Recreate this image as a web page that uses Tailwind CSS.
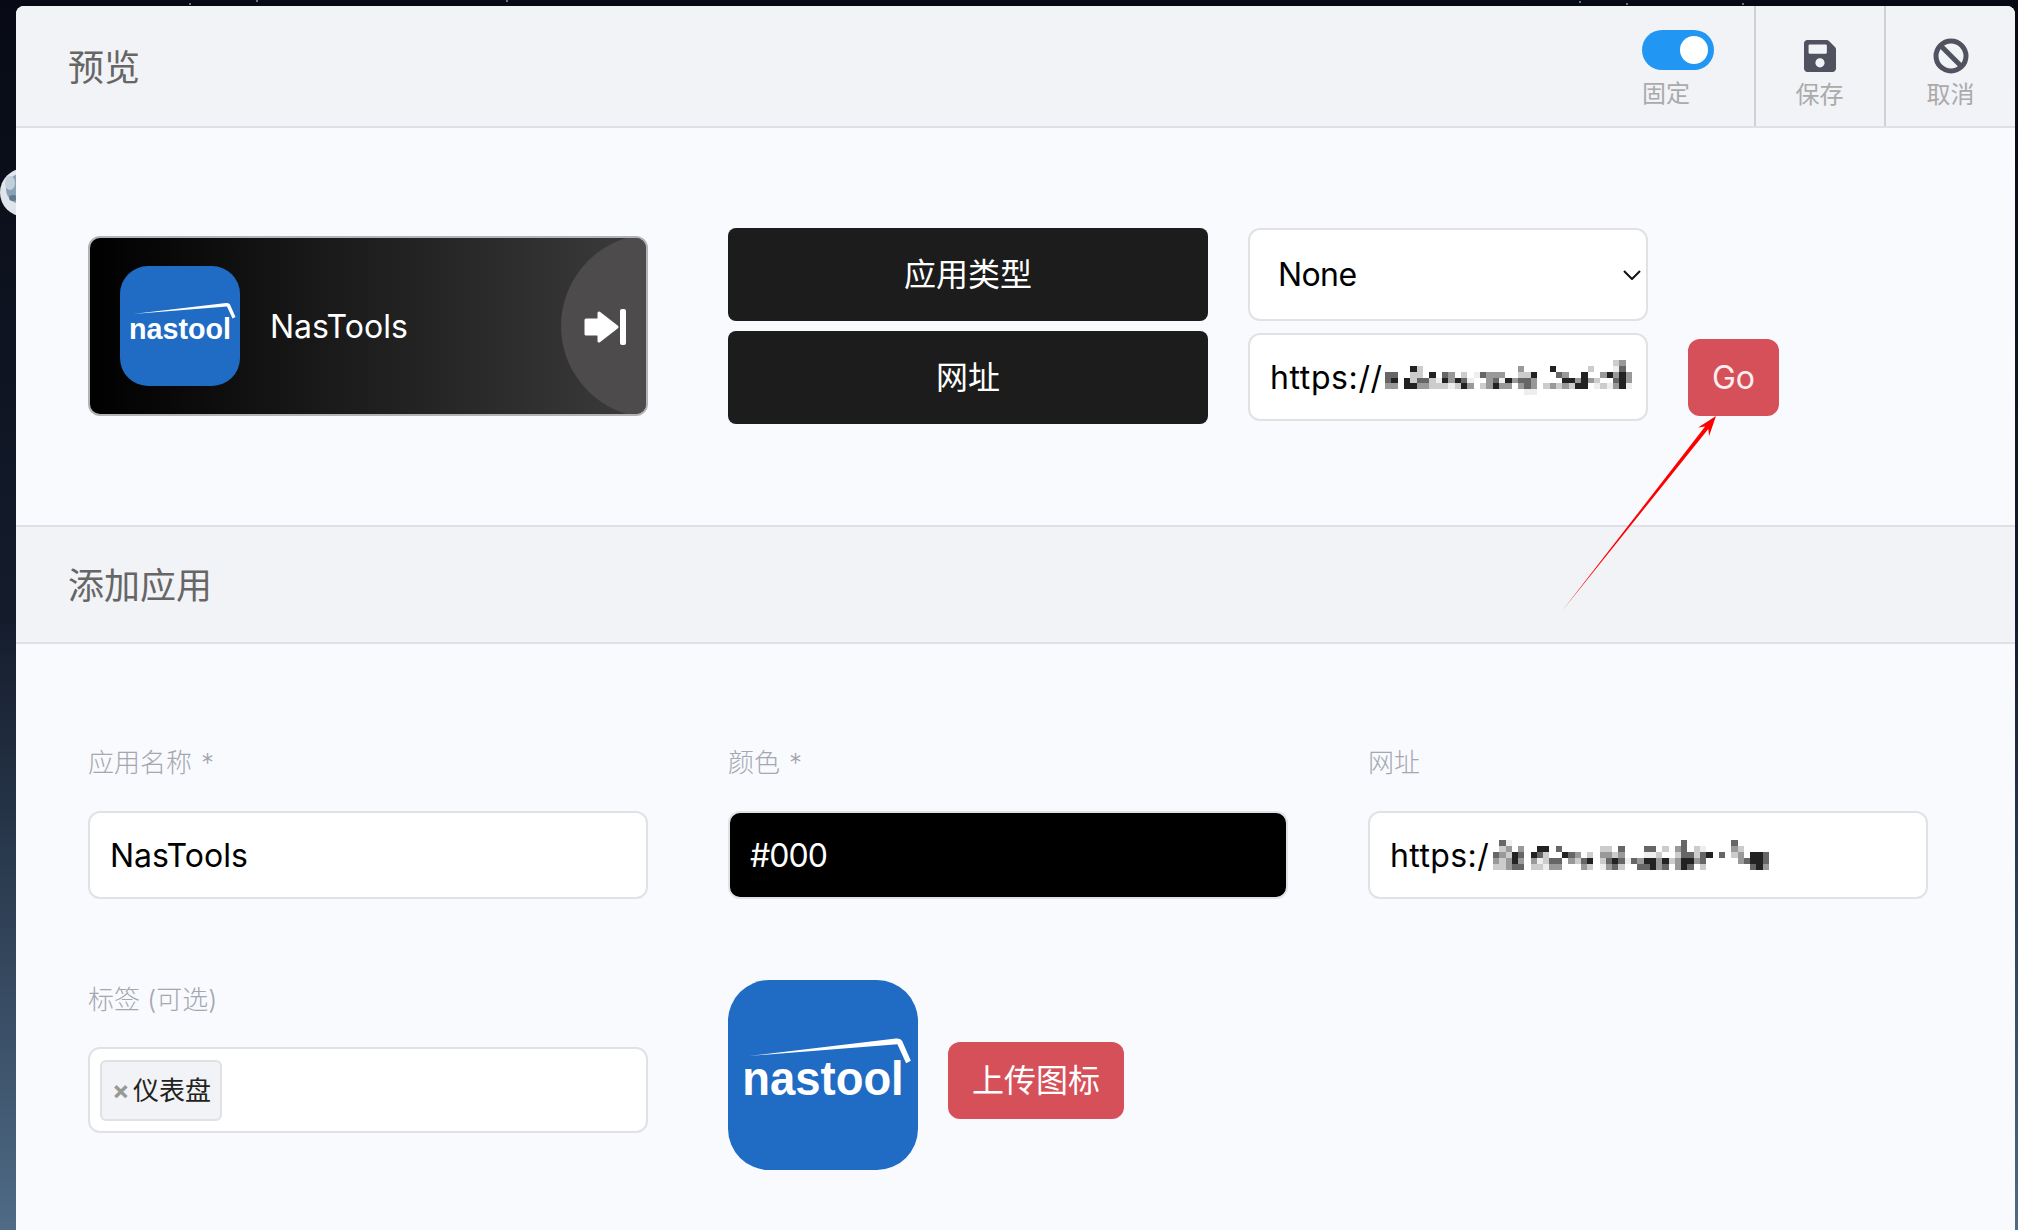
<!DOCTYPE html>
<html lang="zh-CN">
<head>
<meta charset="utf-8">
<title>添加应用</title>
<script src="https://cdn.jsdelivr.net/npm/@tailwindcss/browser@4"></script>
</head>
<body class="relative h-[1230px] overflow-hidden bg-gradient-to-b from-[#070a14] via-[#141c2c] to-[#4f6b86] font-['Inter','Noto_Sans_CJK_SC',sans-serif]">
<svg class="absolute left-0 top-[168px]" width="48" height="49" viewBox="0 0 48 49"><circle cx="24" cy="24.500" r="24" fill="#dfe5ea"/><circle cx="21" cy="21" r="15" fill="#8ba2b6"/><ellipse cx="10" cy="15" rx="5" ry="7" fill="#c2d0dc"/><ellipse cx="13" cy="30" rx="4" ry="3" fill="#64798d"/></svg>
<svg class="absolute left-0 top-0" width="2018" height="6"><g fill="#8a93a3"><circle cx="190" cy="4" r="1"/><circle cx="257" cy="1" r="1"/><circle cx="507" cy="1" r="1"/><circle cx="1580" cy="2" r="1"/><circle cx="1627" cy="4" r="1"/><circle cx="1743" cy="4" r="1"/></g></svg>

<main class="relative ml-[16px] mr-[3px] mt-[6px] h-[1224px] overflow-hidden rounded-t-[8px] bg-[#f9fafe]">
  <!-- header -->
  <header class="flex h-[122px] items-stretch border-b-2 border-[#dfe0e7] bg-[#f2f3f7] pl-[52px]">
    <h2 class="flex flex-1 items-center pt-[4px] text-[36px] font-normal text-[#666]">预览</h2>
    <div class="flex w-[112px] flex-col items-start pt-[24px]">
      <div class="relative h-[40px] w-[72px] rounded-full bg-[#2196f3]"><span class="absolute right-[6px] top-[6px] size-[28px] rounded-full bg-white"></span></div>
      <span class="mt-[9px] text-[24px] leading-[30px] font-normal text-[#aaa]">固定</span>
    </div>
    <div class="flex w-[130px] flex-col items-center border-l-2 border-[#d0d1d6] pr-[1px] pt-[34px]">
      <svg width="32" height="32" viewBox="0 32 448 448" fill="#50525f"><path d="M433.941 129.941l-83.882-83.882A48 48 0 0 0 316.118 32H48C21.49 32 0 53.49 0 80v352c0 26.51 21.49 48 48 48h352c26.51 0 48-21.49 48-48V163.882a48 48 0 0 0-14.059-33.941zM224 416c-35.346 0-64-28.654-64-64 0-35.346 28.654-64 64-64s64 28.654 64 64c0 35.346-28.654 64-64 64zm96-304.52V212c0 6.627-5.373 12-12 12H76c-6.627 0-12-5.373-12-12V108c0-6.627 5.373-12 12-12h228.52c3.183 0 6.235 1.264 8.485 3.515l3.48 3.48A11.996 11.996 0 0 1 320 111.48z"/></svg>
      <span class="mt-[8px] text-[24px] leading-[30px] font-normal text-[#aaa]">保存</span>
    </div>
    <div class="flex w-[131px] flex-col items-center border-l-2 border-[#d0d1d6] pt-[32px]">
      <svg width="36" height="36" viewBox="0 0 36 36" fill="none" stroke="#50525f" stroke-width="5"><circle cx="18" cy="18" r="15"/><path d="M7.500 7.500l21 21"/></svg>
      <span class="mt-[6px] text-[24px] leading-[30px] font-normal text-[#aaa]">取消</span>
    </div>
  </header>

  <!-- preview -->
  <section class="flex h-[397px] items-start pl-[72px] pt-[100px]">
    <div class="relative mt-[8px] flex h-[180px] w-[560px] items-center overflow-hidden rounded-[12px] border-2 border-[#b3b3b7] bg-linear-to-r/srgb from-[#000] to-[#3c3c3c] pl-[30px]">
      <svg class="shrink-0" width="120" height="120" viewBox="0 0 120 120"><rect width="120" height="120" rx="28" fill="#206bc4"/><path d="M13 48L106 37Q109 36.500 110 38.500L115.500 51L112.500 52.500L107 40.500Z" fill="#fff"/><text x="9" y="72.500" font-family="Liberation Sans" font-weight="700" font-size="30" fill="#fff" textLength="102" lengthAdjust="spacingAndGlyphs">nastool</text></svg>
      <span class="ml-[30px] pt-[1px] text-[32px] text-white">NasTools</span>
      <div class="absolute left-[471px] top-[-4px] size-[184px] rounded-full bg-[#4d4b4c]"></div>
      <svg class="absolute left-[494px] top-[71px]" width="42" height="36" viewBox="0 0 42 36" fill="#fff"><path d="M2 11H15V4L33 18L15 32V25H2Z" stroke="#fff" stroke-width="3" stroke-linejoin="round"/><rect x="36" y="0" width="6" height="36" rx="2"/></svg>
    </div>
    <div class="ml-[80px] flex w-[480px] flex-col gap-[10px]">
      <div class="flex h-[93px] items-center justify-center rounded-[8px] bg-[#1c1c1c] text-[32px] text-white">应用类型</div>
      <div class="flex h-[93px] items-center justify-center rounded-[8px] bg-[#1c1c1c] text-[32px] text-white">网址</div>
    </div>
    <div class="ml-[40px] flex w-[400px] flex-col gap-[12px]">
      <div class="relative h-[93px]">
        <select class="h-full w-full appearance-none rounded-[12px] border-2 border-[#e1e2e6] bg-white pl-[28px] text-[32px] tracking-[-0.6px] text-black"><option>None</option></select>
        <svg class="absolute right-[7px] top-[42px]" width="18" height="10" viewBox="0 0 18 10" fill="none" stroke="#111" stroke-width="2"><path d="M1 1l8 8 8-8"/></svg>
      </div>
      <div class="relative h-[88px]">
        <input class="h-full w-full rounded-[12px] border-2 border-[#e1e2e6] bg-white pl-[20px] text-[32px] tracking-[0.6px] text-black" value="https://">
        <svg class="absolute left-[137px] top-[27px]" width="247" height="35" viewBox="0 0 39 6" preserveAspectRatio="none" shape-rendering="crispEdges" fill="none" stroke-width="1">
          <path stroke="#eee" d="M36 1.500h1M14 2.500h1M8 3.500h1M13 3.500h1M18 3.500h1M10 4.500h1M33 4.500h1M35 4.500h1M38 4.500h1M22 5.500h2"/>
          <path stroke="#ccc" d="M36 .5h1M5 1.500h1M32 1.500h1M4 2.500h2M12 2.500h1M21 2.500h2M4 3.500h1M7 3.500h1M33 3.500h1M7 4.500h3M11 4.500h1M15 4.500h1M25 4.500h1M27 4.500h1M29 4.500h1M34 4.500h1"/>
          <path stroke="#999" d="M37 .5h1M21 1.500h1M10 2.500h1M16 2.500h3M28 2.500h1M34 2.500h1M36 2.500h1M38 2.500h1M10 3.500h1M16 3.500h1M20 3.500h1M23 3.500h1M30 3.500h1M32 3.500h1M38 3.500h1M0 4.500h2M5 4.500h2M13 4.500h1M16 4.500h1M18 4.500h2M21 4.500h1M23 4.500h1M26 4.500h1M28 4.500h1M36 4.500h1"/>
          <path stroke="#666" d="M37 1.500h1M0 2.500h2M9 2.500h1M15 2.500h1M27 2.500h1M0 3.500h1M5 3.500h2M12 3.500h1M17 3.500h1M21 3.500h2M36 3.500h1M22 4.500h1"/>
          <path stroke="#222" d="M4 1.500h1M26 1.500h1M7 2.500h1M23 2.500h1M31 2.500h1M35 2.500h1M37 2.500h1M1 3.500h1M3 3.500h1M9 3.500h1M11 3.500h1M19 3.500h1M28 3.500h2M31 3.500h1M37 3.500h1M3 4.500h2M12 4.500h1M17 4.500h1M30 4.500h2M37 4.500h1"/>
        </svg>
      </div>
    </div>
    <button class="ml-[40px] mt-[111px] h-[77px] w-[91px] rounded-[12px] bg-[#d6505a] text-[32px] text-[#fbeeef]">Go</button>
  </section>

  <!-- add -->
  <header class="flex h-[119px] items-center border-y-2 border-[#dfe0e7] bg-[#f2f3f7] pl-[52px] pt-[3px]">
    <h2 class="text-[36px] font-normal text-[#666]">添加应用</h2>
  </header>
  <section class="grid grid-cols-[560px_560px_560px] gap-x-[80px] pl-[72px] pt-[102px]">
    <div>
      <label class="block text-[26px] leading-[34px] font-light text-[#a5a7b0]">应用名称<span class="ml-[9px]">*</span></label>
      <input class="mt-[31px] block h-[88px] w-full rounded-[12px] border-2 border-[#e1e2e6] bg-white pl-[20px] text-[32px] text-black" value="NasTools">
    </div>
    <div>
      <label class="block text-[26px] leading-[34px] font-light text-[#a5a7b0]">颜色<span class="ml-[9px]">*</span></label>
      <input class="mt-[31px] block h-[88px] w-full rounded-[12px] border-2 border-[#e1e2e6] bg-black pl-[20px] text-[32px] tracking-[-1px] text-white" value="#000">
    </div>
    <div>
      <label class="block text-[26px] leading-[34px] font-light text-[#a5a7b0]">网址</label>
      <div class="relative mt-[31px] h-[88px]">
        <input class="h-full w-full rounded-[12px] border-2 border-[#e1e2e6] bg-white pl-[20px] text-[32px] tracking-[0.4px] text-black" value="https:/">
        <svg class="absolute left-[125px] top-[29px]" width="276" height="30" viewBox="0 0 44 5" preserveAspectRatio="none" shape-rendering="crispEdges" fill="none" stroke-width="1">
          <path stroke="#eee" d="M2 .5h1M33 1.500h1M24 2.500h2M7 3.500h1M21 3.500h1M8 4.500h1M17 4.500h1"/>
          <path stroke="#ccc" d="M1 1.500h1M17 1.500h2M27 1.500h1M32 1.500h1M39 1.500h1M2 2.500h1M8 2.500h1M15 2.500h1M19 2.500h1M26 2.500h1M29 2.500h1M32 2.500h1M38 2.500h1M1 3.500h1M8 3.500h1M13 3.500h1M17 3.500h1M28 3.500h1M0 4.500h2M6 4.500h2M15 4.500h1M20 4.500h1M33 4.500h1"/>
          <path stroke="#999" d="M2 1.500h1M4 1.500h1M29 1.500h1M38 1.500h1M1 2.500h1M13 2.500h1M17 2.500h2M20 2.500h1M39 2.500h1M0 3.500h1M2 3.500h1M4 3.500h1M6 3.500h1M12 3.500h1M23 3.500h1M26 3.500h1M29 3.500h1M32 3.500h1M39 3.500h1M2 4.500h1M9 4.500h2M14 4.500h1M18 4.500h1M26 4.500h1M29 4.500h1M43 4.500h1"/>
          <path stroke="#666" d="M1 .5h1M30 .5h1M38 .5h1M10 1.500h1M20 1.500h1M24 1.500h2M30 1.500h1M0 2.500h1M4 2.500h1M7 2.500h1M12 2.500h1M30 2.500h2M33 2.500h1M36 2.500h1M43 2.500h1M9 3.500h2M14 3.500h1M18 3.500h1M20 3.500h1M22 3.500h1M33 3.500h1M40 3.500h1M43 3.500h1M3 4.500h2M19 4.500h1M23 4.500h2M27 4.500h1M31 4.500h1M41 4.500h1"/>
          <path stroke="#222" d="M7 1.500h2M3 2.500h1M6 2.500h1M11 2.500h1M34 2.500h1M41 2.500h2M3 3.500h1M15 3.500h1M19 3.500h1M24 3.500h2M27 3.500h1M30 3.500h2M41 3.500h2M25 4.500h1M30 4.500h1M42 4.500h1"/>
        </svg>
      </div>
    </div>
  </section>
  <section class="mt-[81px] flex items-start pl-[72px]">
    <div class="w-[560px] pt-[3px]">
      <label class="block text-[26px] leading-[34px] font-light text-[#a5a7b0]">标签 (可选)</label>
      <div class="mt-[30px] flex h-[86px] items-center rounded-[12px] border-2 border-[#e1e2e6] bg-white pl-[10px]">
        <span class="flex h-[61px] w-[122px] items-center rounded-[6px] border-2 border-[#e0e1e5] bg-[#f2f3f6] pl-[10px] text-[26px] text-[#222]"><span class="mr-[1px] w-[20px] text-[26px] font-bold text-[#999]">×</span>仪表盘</span>
      </div>
    </div>
    <svg class="ml-[80px]" width="190" height="190" viewBox="0 0 120 120"><rect width="120" height="120" rx="26" fill="#206bc4"/><path d="M13 48L106 37Q109 36.500 110 38.500L115.500 51L112.500 52.500L107 40.500Z" fill="#fff"/><text x="9" y="72.500" font-family="Liberation Sans" font-weight="700" font-size="30" fill="#fff" textLength="102" lengthAdjust="spacingAndGlyphs">nastool</text></svg>
    <button class="ml-[30px] mt-[62px] h-[77px] w-[176px] rounded-[12px] bg-[#d6505a] text-[32px] text-white">上传图标</button>
  </section>

  <!-- annotation arrow -->
  <svg class="absolute left-[1530px] top-[400px]" width="190" height="210" viewBox="0 0 190 210"><path d="M16 205L162.300 23L163.100 30L170 10L152.100 21.400L159.100 20.600Z" fill="#f00"/></svg>
</main>
</body>
</html>
